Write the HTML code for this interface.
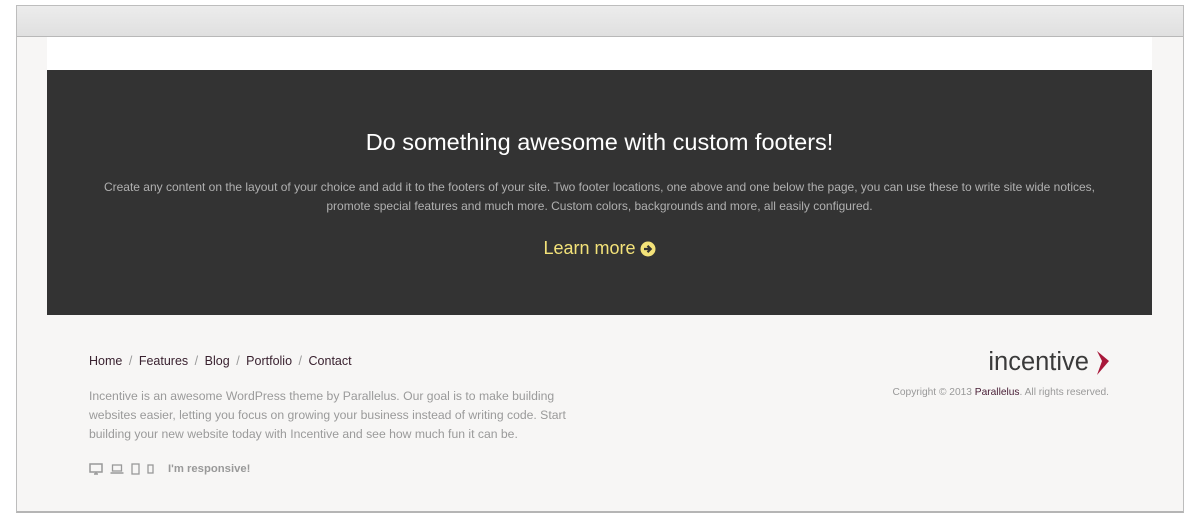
<!DOCTYPE html>
<html><head><meta charset="utf-8"><style>
*{margin:0;padding:0;box-sizing:border-box}
body{width:1200px;height:514px;background:#fff;font-family:"Liberation Sans",Arial,sans-serif;position:relative;overflow:hidden}
.frame{position:absolute;left:16px;top:5px;width:1168px;height:508px;border:1px solid #bdbdbd;border-bottom:2px solid #b5b5b5;background:#f7f6f5}
.bar{position:absolute;left:0;top:0;right:0;height:31px;background:linear-gradient(#ececec,#e0e0e0);border-bottom:1px solid #b8b8b8}
.white{position:absolute;left:30px;top:31px;width:1105px;height:34px;background:#fff}
.dark{position:absolute;left:30px;top:64px;width:1105px;height:245px;background:#333;text-align:center}
.dark h2{font-weight:normal;color:#fff;font-size:23.5px;margin-top:59px}
.dark p{color:#b0b0b0;font-size:12px;line-height:19px;width:1000px;margin:22px auto 0}
.lm{color:#f3e279;font-size:18px;margin-top:22px;display:inline-flex;align-items:center;gap:4px}
.nav{position:absolute;left:72px;top:348px;font-size:12.5px;color:#3a2230}
.nav span{color:#999;margin:0 6.5px}
.desc{position:absolute;left:72px;top:381px;width:490px;font-size:12.2px;line-height:19px;color:#9a9a9a}
.resp{position:absolute;left:72px;top:457px;display:flex;align-items:center;gap:7px;color:#999;font-size:11.3px;font-weight:bold}
.logo{position:absolute;right:74px;top:342px;font-size:25.5px;color:#3a3a3a;display:flex;align-items:center;gap:8px}
.copy{position:absolute;right:74px;top:381px;font-size:10.2px;color:#999}
.copy b{font-weight:normal;color:#4a2038}
</style></head><body>
<div class="frame">
<div class="bar"></div>
<div class="white"></div>
<div class="dark">
<h2>Do something awesome with custom footers!</h2>
<p>Create any content on the layout of your choice and add it to the footers of your site. Two footer locations, one above and one below the page, you can use these to write site wide notices, promote special features and much more. Custom colors, backgrounds and more, all easily configured.</p>
<div class="lm">Learn more <svg width="16" height="16" viewBox="0 0 16 16"><circle cx="8" cy="8" r="7.5" fill="#f3e279"/><path d="M4 8h6M7.5 4.8L10.7 8 7.5 11.2" stroke="#333" stroke-width="2.2" fill="none"/></svg></div>
</div>
<div class="nav">Home<span>/</span>Features<span>/</span>Blog<span>/</span>Portfolio<span>/</span>Contact</div>
<div class="desc">Incentive is an awesome WordPress theme by Parallelus. Our goal is to make building websites easier, letting you focus on growing your business instead of writing code. Start building your new website today with Incentive and see how much fun it can be.</div>
<div class="resp">
<svg width="14" height="12" viewBox="0 0 14 12"><rect x="1" y="1" width="12" height="8" fill="none" stroke="#999" stroke-width="1.5"/><path d="M5 11h4M7 9v2" stroke="#999" stroke-width="1.5"/></svg>
<svg width="14" height="12" viewBox="0 0 14 12"><rect x="2.5" y="2" width="9" height="6" fill="none" stroke="#999" stroke-width="1.3"/><path d="M0.5 10h13" stroke="#999" stroke-width="1.5"/></svg>
<svg width="9" height="12" viewBox="0 0 9 12"><rect x="1" y="1" width="7" height="10" fill="none" stroke="#999" stroke-width="1.3"/></svg>
<svg width="7" height="12" viewBox="0 0 7 12"><rect x="1" y="2" width="5" height="8" fill="none" stroke="#999" stroke-width="1.3"/></svg>
<span style="margin-left:7px">I'm responsive!</span></div>
<div class="logo">incentive <svg width="12" height="24" viewBox="0 0 12 24"><path d="M0 0L12 10 0 24 5 10Z" fill="#a8183a"/></svg></div>
<div class="copy">Copyright © 2013 <b>Parallelus</b>. All rights reserved.</div>
</div>
</body></html>
